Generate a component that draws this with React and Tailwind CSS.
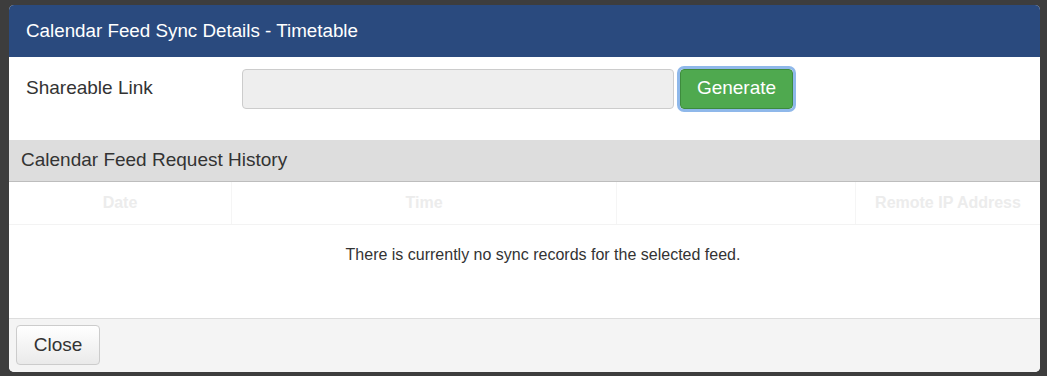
const columns = [
  { label: "Date", width: "w-[223px]", align: "text-center" },
  { label: "Time", width: "w-[385px]", align: "text-center" },
  { label: "", width: "w-[239px]", align: "text-center" },
  { label: "Remote IP Address", width: "flex-1", align: "text-center" },
];

const App = () => {
  return (
    <div
      className="w-[1047px] h-[376px] bg-[#3d3d3d] pl-[9px] pt-[5px]"
      style={{ fontFamily: '"Liberation Sans", Arial, sans-serif' }}
    >
      <div className="w-[1031px] h-[367px] bg-white rounded-[5px] overflow-hidden flex flex-col">
        {/* header */}
        <div className="h-[52px] bg-[#2a4a7e] flex items-center px-[17px]">
          <h1 className="text-white text-[18.8px]">
            Calendar Feed Sync Details - Timetable
          </h1>
        </div>

        {/* shareable link */}
        <div className="flex items-center h-[62px] pt-[1px]">
          <span className="w-[233px] pl-[17px] text-[19px] text-[#333]">
            Shareable Link
          </span>
          <div className="w-[432px] h-[40px] bg-[#eeeeee] border border-[#cccccc] rounded-[4px]" />
          <button className="ml-[6px] w-[113px] h-[40px] rounded-[4px] bg-[#4fa94f] border border-[#3d8b3d] text-white text-[19px] outline-[3px] outline-solid outline-[#8fb8ea]">
            Generate
          </button>
        </div>

        {/* history */}
        <div className="mt-[21px] h-[42px] bg-[#dddddd] border-b border-[#bdbdbd] flex items-center px-[12px]">
          <span className="text-[19px] text-[#333]">
            Calendar Feed Request History
          </span>
        </div>
        <div className="flex h-[43px] border-b border-[#f3f3f3]">
          {columns.map((col, index) => (
            <div
              key={index}
              className={`${col.width} ${col.align} flex items-center justify-center font-bold text-[16px] text-[#ececec] ${
                index < columns.length - 1 ? "border-r border-[#f5f5f5]" : ""
              }`}
            >
              {col.label}
            </div>
          ))}
        </div>
        <div className="h-[93px] flex justify-center pl-[37px] pt-[18px] text-[16px] text-[#333]">
          There is currently no sync records for the selected feed.
        </div>

        {/* footer */}
        <div className="flex-1 bg-[#f4f4f4] border-t border-[#dddddd] px-[7px] pt-[6px]">
          <button className="w-[84px] h-[40px] rounded-[4px] border border-[#cccccc] bg-gradient-to-b from-white to-[#eaeaea] text-[19px] text-[#333]">
            Close
          </button>
        </div>
      </div>
    </div>
  );
};

export default App;
